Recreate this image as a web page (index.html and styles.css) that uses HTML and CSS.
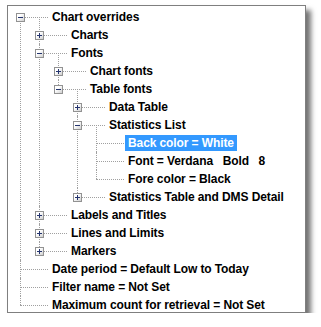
FILE: index.html
```html
<!DOCTYPE html>
<html lang="en">
<head>
  <meta charset="UTF-8" />
  <title>Chart overrides</title>
  <link rel="stylesheet" href="styles.css">
</head>
<body>
  <div class="panel">
    <ul class="tree">
      <li>
        <div class="row"><span class="box minus"></span><span class="label">Chart overrides</span></div>
        <ul>
          <li><div class="row"><span class="box plus"></span><span class="label">Charts</span></div></li>
          <li>
            <div class="row"><span class="box minus"></span><span class="label">Fonts</span></div>
            <ul>
              <li><div class="row"><span class="box plus"></span><span class="label">Chart fonts</span></div></li>
              <li>
                <div class="row"><span class="box minus"></span><span class="label">Table fonts</span></div>
                <ul>
                  <li><div class="row"><span class="box plus"></span><span class="label">Data Table</span></div></li>
                  <li>
                    <div class="row"><span class="box minus"></span><span class="label">Statistics List</span></div>
                    <ul>
                      <li><div class="row"><span class="label selected">Back color = White</span></div></li>
                      <li><div class="row"><span class="label">Font = Verdana   Bold   8</span></div></li>
                      <li><div class="row"><span class="label">Fore color = Black</span></div></li>
                    </ul>
                  </li>
                  <li><div class="row"><span class="box plus"></span><span class="label">Statistics Table and DMS Detail</span></div></li>
                </ul>
              </li>
            </ul>
          </li>
          <li><div class="row"><span class="box plus"></span><span class="label">Labels and Titles</span></div></li>
          <li><div class="row"><span class="box plus"></span><span class="label">Lines and Limits</span></div></li>
          <li><div class="row"><span class="box plus"></span><span class="label">Markers</span></div></li>
        </ul>
      </li>
      <li><div class="row"><span class="label">Date period = Default Low to Today</span></div></li>
      <li><div class="row"><span class="label">Filter name = Not Set</span></div></li>
      <li><div class="row"><span class="label">Maximum count for retrieval = Not Set</span></div></li>
    </ul>
  </div>
</body>
</html>
```

FILE: styles.css
```css
* {
  box-sizing: border-box;
  margin: 0;
  padding: 0;
}

body {
  background: white;
  font-family: 'Liberation Sans', Arial, sans-serif;
  font-size: 12px;
  font-weight: bold;
  color: black;
}

.panel {
  margin: 5px 0 0 7px;
  width: 299px;
  height: 308px;
  border: 1px solid #7f7f7f;
  background: white;
  overflow: hidden;
  padding-top: 2px;
  box-shadow: 5px 5px 5px rgba(0,0,0,0.55);
}

.tree, .tree ul {
  list-style: none;
}

.tree ul {
  padding-left: 19px;
}

.tree li {
  position: relative;
}

/* vertical connector */
.tree li::before {
  content: "";
  position: absolute;
  left: 12px;
  top: 0;
  bottom: 0;
  border-left: 1px dotted #a0a0a0;
}

.tree ul > li:first-child::before {
  top: -9px;
}

.tree > li:first-child::before {
  top: 9px;
}

.tree li:last-child::before {
  bottom: auto;
  height: 9px;
}

.row {
  position: relative;
  height: 18px;
  display: flex;
  align-items: center;
  padding-left: 41px;
}

/* horizontal connector */
.row::after {
  content: "";
  position: absolute;
  left: 12px;
  top: 9px;
  width: 28px;
  border-top: 1px dotted #a0a0a0;
}

.box {
  position: absolute;
  left: 8px;
  top: 5px;
  width: 9px;
  height: 9px;
  border: 1px solid #929292;
  background: linear-gradient(135deg, #ffffff 35%, #cfcfcf);
  z-index: 2;
}

.box::before {
  content: "";
  position: absolute;
  left: 1px;
  top: 3px;
  width: 5px;
  height: 1px;
  background: #24346e;
}

.box.plus::after {
  content: "";
  position: absolute;
  left: 3px;
  top: 1px;
  width: 1px;
  height: 5px;
  background: #24346e;
}

.label {
  position: relative;
  z-index: 1;
  padding: 0 3px;
  line-height: 16px;
  white-space: pre;
  letter-spacing: -0.1px;
}

.label.selected {
  background: #3399ff;
  color: white;
}
```
